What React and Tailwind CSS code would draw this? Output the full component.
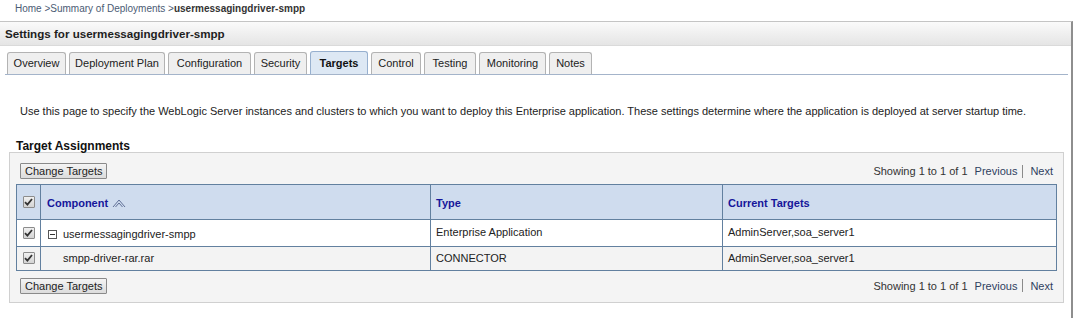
const tabs = [
    { label: "Overview", w: "w-[59px]" },
    { label: "Deployment Plan", w: "w-[96px]" },
    { label: "Configuration", w: "w-[83px]" },
    { label: "Security", w: "w-[53px]" },
    { label: "Targets", w: "w-[58px]", active: true },
    { label: "Control", w: "w-[50px]" },
    { label: "Testing", w: "w-[52px]" },
    { label: "Monitoring", w: "w-[67px]" },
    { label: "Notes", w: "w-[43px]" },
];

const CheckBox = () => (
    <div className="w-[12px] h-[12px] border border-[#8c8c8c] bg-gradient-to-b from-[#f0f0f0] to-[#d4d4d4] flex items-center justify-center rounded-[1px]">
        <svg width="9" height="8" viewBox="0 0 9 8">
            <path d="M1 4.2 L3.4 6.6 L8 1" stroke="#333" strokeWidth="1.8" fill="none" />
        </svg>
    </div>
);

const ChangeButton = () => (
    <button className="h-[16px] px-[4px] border border-[#8a8a8a] bg-gradient-to-b from-[#f4f4f4] to-[#dcdcdc] text-[11px] leading-[14px] text-[#222] rounded-[1px]">
        Change Targets
    </button>
);

const Pager = () => (
    <div className="flex items-center text-[11px] text-[#333]">
        <span>Showing 1 to 1 of 1</span>
        <span className="ml-[7px] text-[#2f3f5f]">Previous</span>
        <span className="mx-[5px] h-[13px] border-l border-[#8a8a8a]"></span>
        <span className="ml-[2px] text-[#2f3f5f]">Next</span>
    </div>
);

const SortIcon = () => (
    <svg width="14" height="9" viewBox="0 0 14 9" className="ml-[4px]">
        <path d="M1 8 L7 1 L13 8" stroke="#5f6f96" strokeWidth="1" fill="none" />
        <path d="M3.5 8 L7 4 L10.5 8" stroke="#5f6f96" strokeWidth="1" fill="none" />
    </svg>
);

export default function App() {
    return (
        <div className="w-[1076px] h-[318px] bg-white text-[11px] text-[#222] font-['Liberation_Sans',Arial,sans-serif] overflow-hidden">
            {/* breadcrumb */}
            <div className="h-[21px] pl-[15px] pt-[2px] leading-[13px] text-[10px]">
                <span className="text-[#4b5b74]">Home &gt;Summary of Deployments &gt;</span>
                <span className="font-bold text-[#333]">usermessagingdriver-smpp</span>
            </div>

            {/* main panel */}
            <div className="w-[1073px] h-[297px] border-t border-[#c4c4c4] border-r-2 border-r-[#8e8e8e]">
                <div className="h-[24px] bg-gradient-to-b from-[#fafafa] to-[#e5e5e5] border-b border-[#dadada] pl-[5px] flex items-center">
                    <span className="font-bold text-[11.6px] text-[#1e1e1e]">Settings for usermessagingdriver-smpp</span>
                </div>

                {/* tabs */}
                <div className="mt-[5px] ml-[5px] mr-[3px] flex items-end gap-[3px] pl-[2px] border-b border-[#a4b4ca]">
                    {tabs.map((t) =>
                        t.active ? (
                            <div key={t.label} className={`${t.w} h-[23px] flex items-center justify-center border border-b-0 border-[#97b0cf] rounded-t-[3px] bg-[#dde8f4] font-bold text-[#111]`}>
                                {t.label}
                            </div>
                        ) : (
                            <div key={t.label} className={`${t.w} h-[22px] flex items-center justify-center border border-b-0 border-[#b3b3b3] rounded-t-[3px] bg-[#efefef] text-[#222]`}>
                                {t.label}
                            </div>
                        )
                    )}
                </div>

                <p className="mt-[29px] ml-[20px] leading-[14px] text-[#222]">
                    Use this page to specify the WebLogic Server instances and clusters to which you want to deploy this Enterprise application. These settings determine where the application is deployed at server startup time.
                </p>

                <h3 className="mt-[23px] ml-[16px] font-bold text-[12px] leading-[10px] text-[#111]">Target Assignments</h3>

                {/* assignments box */}
                <div className="mt-[1px] ml-[9px] w-[1055px] h-[151px] bg-[#f4f4f4] border border-[#d0d0d0] pt-[10px]">
                    <div className="flex items-center justify-between pl-[10px] pr-[10px]">
                        <ChangeButton />
                        <Pager />
                    </div>

                    <table className="mt-[4px] ml-[6px] w-[1041px] border-collapse text-[11px]">
                        <thead>
                            <tr className="h-[35px] bg-[#cfdcee]">
                                <th className="w-[24px] border border-[#62809f] align-middle">
                                    <div className="flex justify-center"><CheckBox /></div>
                                </th>
                                <th className="w-[390px] border border-[#62809f] text-left pl-[6px] font-bold text-[#16169a]">
                                    <div className="flex items-center pt-[4px]">Component<SortIcon /></div>
                                </th>
                                <th className="w-[292px] border border-[#62809f] text-left pl-[5px] pt-[4px] font-bold text-[#16169a]">Type</th>
                                <th className="border border-[#62809f] text-left pl-[5px] pt-[4px] font-bold text-[#16169a]">Current Targets</th>
                            </tr>
                        </thead>
                        <tbody>
                            <tr className="h-[27px] bg-white">
                                <td className="border border-[#62809f]">
                                    <div className="flex justify-center"><CheckBox /></div>
                                </td>
                                <td className="border border-[#62809f] pl-[7px] align-bottom pb-[3px]">
                                    <div className="flex items-center">
                                        <div className="w-[9px] h-[9px] border border-[#555] flex items-center justify-center mr-[6px]">
                                            <div className="w-[5px] h-[1px] bg-[#333]"></div>
                                        </div>
                                        usermessagingdriver-smpp
                                    </div>
                                </td>
                                <td className="border border-[#62809f] pl-[5px] align-bottom pb-[5px]">Enterprise Application</td>
                                <td className="border border-[#62809f] pl-[5px] align-bottom pb-[5px]">AdminServer,soa_server1</td>
                            </tr>
                            <tr className="h-[24px] bg-[#f3f3f3]">
                                <td className="border border-[#62809f]">
                                    <div className="flex justify-center"><CheckBox /></div>
                                </td>
                                <td className="border border-[#62809f] pl-[22px]">smpp-driver-rar.rar</td>
                                <td className="border border-[#62809f] pl-[5px]">CONNECTOR</td>
                                <td className="border border-[#62809f] pl-[5px]">AdminServer,soa_server1</td>
                            </tr>
                        </tbody>
                    </table>

                    <div className="mt-[7px] flex items-center justify-between pl-[10px] pr-[10px]">
                        <ChangeButton />
                        <Pager />
                    </div>
                </div>
            </div>
        </div>
    );
}
